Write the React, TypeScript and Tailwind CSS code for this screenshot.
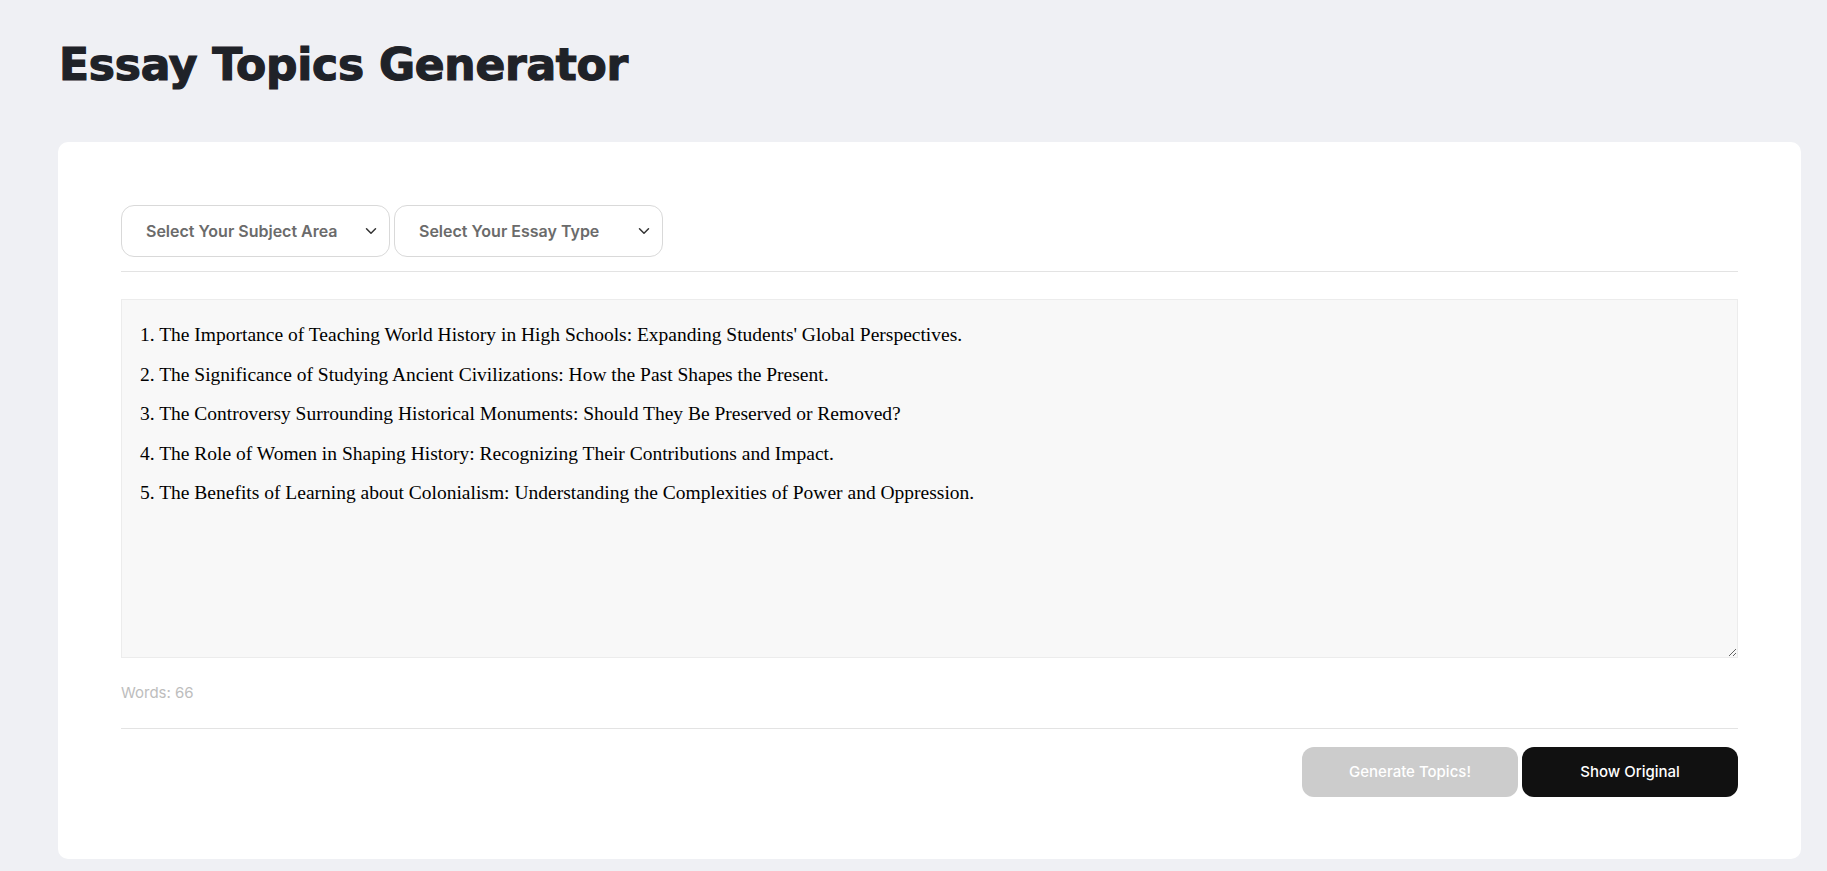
import { ChevronDown } from 'lucide-react'

const topics = [
  "1. The Importance of Teaching World History in High Schools: Expanding Students' Global Perspectives.",
  '2. The Significance of Studying Ancient Civilizations: How the Past Shapes the Present.',
  '3. The Controversy Surrounding Historical Monuments: Should They Be Preserved or Removed?',
  '4. The Role of Women in Shaping History: Recognizing Their Contributions and Impact.',
  '5. The Benefits of Learning about Colonialism: Understanding the Complexities of Power and Oppression.',
]

// ---- select box -------------------------------------------------------------

function SelectBox({ label }: { label: string }) {
  return (
    <button
      type="button"
      className="w-[269px] h-[52px] flex items-center justify-between pl-[24px] pr-[9px] rounded-[13px] border border-[#d9d9d9] bg-white text-[16px] font-semibold text-[#6b6b6b]"
    >
      <span>{label}</span>
      <ChevronDown size={18} strokeWidth={2} className="text-[#333]" />
    </button>
  )
}

// ---- page -------------------------------------------------------------------

export default function App() {
  const text = topics.join('\n')
  const words = 66

  return (
    <div className="min-h-screen bg-[#eff0f4] px-[58px] pt-[38px] pb-[12px] font-['Inter',sans-serif]">
      <h1 className="text-[44px] leading-[53px] font-bold text-[#1f2228] tracking-[-0.006em] ml-[1px] font-['DejaVu_Sans',sans-serif] [-webkit-text-stroke:1.2px_#1f2228]">
        Essay Topics Generator
      </h1>

      <div className="mt-[51px] bg-white rounded-[10px] px-[63px] pt-[63px] pb-[62px] w-[1743px]">
        <div className="flex gap-[4px]">
          <SelectBox label="Select Your Subject Area" />
          <SelectBox label="Select Your Essay Type" />
        </div>

        <div className="mt-[14px] h-px bg-[#e3e3e3]" />

        <textarea
          readOnly
          value={text}
          className="mt-[27px] block w-full h-[359px] bg-[#f8f8f8] border border-[#ececec] pt-[15px] px-[18px] font-['Liberation_Serif',serif] text-[19.5px] leading-[39.6px] text-black outline-none"
        />

        <p className="mt-[25px] text-[15px] leading-[20px] text-[#bdbdbd]">Words: {words}</p>

        <div className="mt-[25px] h-px bg-[#e3e3e3]" />

        <div className="mt-[18px] flex justify-end gap-[4px]">
          <button
            type="button"
            className="w-[216px] h-[50px] rounded-[12px] bg-[#cccccc] text-white text-[15px] font-medium"
          >
            Generate Topics!
          </button>
          <button
            type="button"
            className="w-[216px] h-[50px] rounded-[12px] bg-[#111111] text-white text-[15px] font-medium"
          >
            Show Original
          </button>
        </div>
      </div>
    </div>
  )
}
